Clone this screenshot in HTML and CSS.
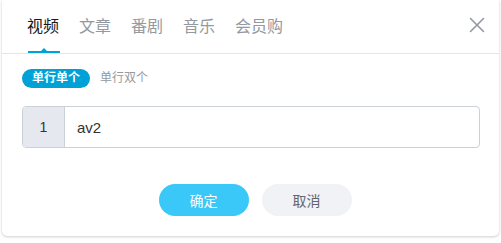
FILE: index.html
```html
<!DOCTYPE html>
<html lang="zh-CN">
<head>
<meta charset="utf-8">
<link rel="stylesheet" href="styles.css">
</head>
<body>
<div class="page">
  <div class="dialog">
    <div class="header">
      <div class="tabs">
        <div class="tab active">视频</div>
        <div class="tab">文章</div>
        <div class="tab">番剧</div>
        <div class="tab">音乐</div>
        <div class="tab">会员购</div>
      </div>
      <div class="close">
        <svg width="16" height="16" viewBox="0 0 16 16"><path d="M1.5 1.5 L14.5 14.5 M14.5 1.5 L1.5 14.5" stroke="#9499a0" stroke-width="1.6" fill="none" stroke-linecap="round"/></svg>
      </div>
    </div>
    <div class="body">
      <div class="modes">
        <span class="mode on">单行单个</span>
        <span class="mode">单行双个</span>
      </div>
      <div class="group">
        <div class="addon">1</div>
        <div class="field">av2</div>
      </div>
      <div class="actions">
        <button class="btn primary">确定</button>
        <button class="btn secondary">取消</button>
      </div>
    </div>
  </div>
</div>
</body>
</html>
```
FILE: styles.css
```css
html, body {
  margin: 0;
  padding: 0;
  background: #ffffff;
}
body {
  font-family: "Liberation Sans", "Noto Sans CJK SC", sans-serif;
  width: 501px;
  height: 243px;
  overflow: hidden;
}
.page {
  padding-left: 2px;
}
.dialog {
  width: 497px;
  height: 236px;
  background: #fff;
  border-radius: 0 0 5px 5px;
  box-shadow: 0 1px 3px rgba(0, 0, 0, 0.18), 0 0 1px rgba(0, 0, 0, 0.12);
  display: flex;
  flex-direction: column;
}
.header {
  height: 53px;
  border-bottom: 1px solid #e3e5e7;
  display: flex;
  justify-content: space-between;
  align-items: stretch;
  padding: 0 14px 0 25px;
  box-sizing: content-box;
}
.tabs {
  display: flex;
  gap: 20px;
}
.tab {
  font-size: 16px;
  color: #9499a0;
  line-height: 20px;
  padding-top: 17px;
  position: relative;
}
.tab.active {
  color: #18191c;
}
.tab.active::after {
  content: "";
  position: absolute;
  left: 1px;
  right: -1px;
  bottom: 0;
  height: 2px;
  background: #00a1d6;
}
.tab.active::before {
  content: "";
  position: absolute;
  left: 50%;
  bottom: 2px;
  margin-left: -2px;
  border-left: 3px solid transparent;
  border-right: 3px solid transparent;
  border-bottom: 3px solid #00a1d6;
}
.close {
  padding-top: 17px;
}
.body {
  padding: 15px 19px 0 20px;
  display: flex;
  flex-direction: column;
}
.modes {
  display: flex;
  align-items: center;
  gap: 10px;
  height: 19px;
}
.mode {
  font-size: 12px;
  color: #9499a0;
  line-height: 19px;
}
.mode.on {
  background: #00a1d6;
  color: #fff;
  font-weight: bold;
  border-radius: 10px;
  padding: 0 10px;
}
.group {
  margin-top: 18px;
  height: 40px;
  border: 1px solid #ccd0d7;
  border-radius: 4px;
  display: flex;
  overflow: hidden;
}
.addon {
  width: 41px;
  background: #e5e9ef;
  border-right: 1px solid #ccd0d7;
  display: flex;
  align-items: center;
  justify-content: center;
  font-size: 14px;
  color: #333;
}
.field {
  flex: 1;
  display: flex;
  align-items: center;
  padding-left: 12px;
  font-size: 15px;
  color: #333;
}
.actions {
  margin-top: 36px;
  padding-left: 8px;
  display: flex;
  justify-content: center;
  gap: 13px;
}
.btn {
  width: 90px;
  height: 32px;
  border: none;
  border-radius: 16px;
  font-family: "Liberation Sans", "Noto Sans CJK SC", sans-serif;
  font-size: 14px;
  padding: 0;
}
.btn.primary {
  background: #39c8f7;
  color: #fff;
}
.btn.secondary {
  background: #f1f2f5;
  color: #61666d;
}
```
